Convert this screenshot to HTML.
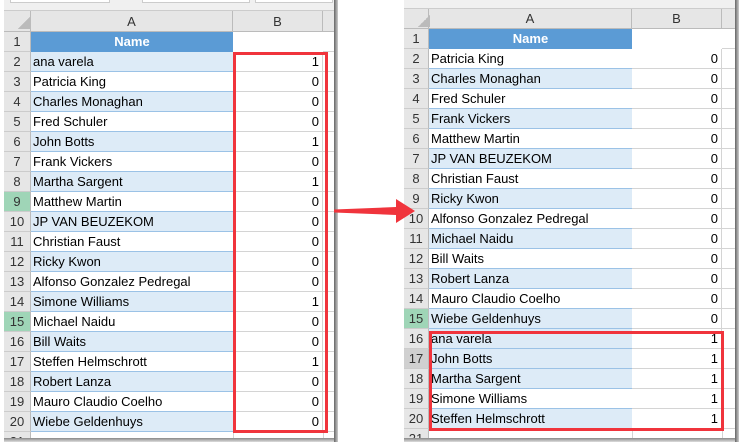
<!DOCTYPE html>
<html><head><meta charset="utf-8"><style>
body{margin:0;width:747px;height:446px;background:#fff;position:relative;overflow:hidden;font-family:"Liberation Sans",Calibri,sans-serif;}
.a{position:absolute;box-sizing:border-box;}
.t{font-size:13px;line-height:20px;white-space:nowrap;color:#000;}
</style></head><body>
<div id="root"></div>
<script>
var R=document.getElementById('root'),h='';
function box(x,y,w,hh,st,txt){h+='<div class="a" style="left:'+x+'px;top:'+y+'px;width:'+w+'px;height:'+hh+'px;'+st+'">'+(txt||'')+'</div>';}
function sheet(o){
 var X=o.x, Y0=o.y0, rh=o.rh, ca=o.ca, cb=o.cb, ce=o.ce, end=o.end;
 box(X,0,end-X,o.bottom,'background:#fff;border-left:1px solid #999;');
 box(X,0,end-X,Y0,'background:#e6e6e6;');
 box(X,0,end-X,o.hy,'background:#f0f0f0;border-bottom:1px solid #ccc;');
 box(X,o.hy,ca-X,o.bottom-o.hy,'background:#e6e6e6;border-right:1px solid #bbb;');
 box(ca,o.hy,cb-ca,Y0-o.hy,'border-right:1px solid #bbb;text-align:center;font-size:13px;line-height:'+(Y0-o.hy)+'px;color:#333;','A');
 box(cb,o.hy,ce-cb,Y0-o.hy,'border-right:1px solid #bbb;text-align:center;font-size:13px;line-height:'+(Y0-o.hy)+'px;color:#333;','B');
 box(X,Y0-1,end-X,1,'background:#bbb;');
 box(X+14,o.hy+6,12,12,'background:linear-gradient(135deg,transparent 50%,#bbb 50%);');
 for(var i=0;i<o.rows.length;i++){
  var r=o.rows[i],y=Y0+i*rh,n=i+1;
  var hb=r.hl=='g'?'#9fd5b7':(r.hl=='d'?'#d0d0d0':'#e6e6e6');
  box(X,y,ca-X,rh,'background:'+hb+';border-bottom:1px solid #ccc;border-right:1px solid #bbb;text-align:center;font-size:13px;line-height:'+rh+'px;color:#333;',n);
  if(n==1){box(ca,y,cb-ca,rh,'background:#5b9bd5;color:#fff;font-weight:bold;text-align:center;font-size:13px;line-height:'+rh+'px;','Name');}
  else{box(ca,y,cb-ca,rh,'background:'+(r.b?'#ddebf7':'#fff')+';border-bottom:1px solid #9bc2e6;padding-left:2px;','<span class="t">'+r.n+'</span>');
   box(cb,y,ce-cb,rh,'border-bottom:1px solid #d4d4d4;border-right:1px solid #d4d4d4;text-align:right;padding-right:3px;','<span class="t">'+r.v+'</span>');}
  box(ce,y,end-ce,rh,'border-bottom:1px solid #d4d4d4;');
 }
 var y21=Y0+o.rows.length*rh;
 box(X,y21,ca-X,o.bottom-y21,'background:#e6e6e6;border-right:1px solid #bbb;text-align:center;font-size:13px;line-height:20px;color:#333;overflow:hidden;','21');
 box(cb,y21,1,o.bottom-y21,'background:#d4d4d4;');
 box(ce,y21,1,o.bottom-y21,'background:#d4d4d4;');
 box(o.x,o.bottom,end-o.x+4,4,'background:linear-gradient(#888,#ddd);');
 box(end,0,4,o.bottom+4,'background:linear-gradient(90deg,#666,#ccc);');
}
var L=[['',0],['ana varela',1],['Patricia King',0],['Charles Monaghan',0],['Fred Schuler',0],['John Botts',1],['Frank Vickers',0],['Martha Sargent',1],['Matthew Martin',0],['JP VAN BEUZEKOM',0],['Christian Faust',0],['Ricky Kwon',0],['Alfonso Gonzalez Pedregal',0],['Simone Williams',1],['Michael Naidu',0],['Bill Waits',0],['Steffen Helmschrott',1],['Robert Lanza',0],['Mauro Claudio Coelho',0],['Wiebe Geldenhuys',0]];
var lr=L.map(function(a,i){var n=i+1;return {n:a[0],v:a[1],b:n%2==0,hl:(n==9||n==15)?'g':''};});
var Rr=[['',0],['Patricia King',0],['Charles Monaghan',0],['Fred Schuler',0],['Frank Vickers',0],['Matthew Martin',0],['JP VAN BEUZEKOM',0],['Christian Faust',0],['Ricky Kwon',0],['Alfonso Gonzalez Pedregal',0],['Michael Naidu',0],['Bill Waits',0],['Robert Lanza',0],['Mauro Claudio Coelho',0],['Wiebe Geldenhuys',0],['ana varela',1],['John Botts',1],['Martha Sargent',1],['Simone Williams',1],['Steffen Helmschrott',1]];
var rr=Rr.map(function(a,i){var n=i+1;var b=n%2==1;if(n>=16)b=(n!=19);return {n:a[0],v:a[1],b:b,hl:n==15?'g':(n==17?'d':'')};});
sheet({x:4,hy:11,y0:32,rh:20,ca:31,cb:233,ce:323,end:334,bottom:438,rows:lr});
sheet({x:404,hy:9,y0:29,rh:20,ca:429,cb:632,ce:722,end:735,bottom:438,rows:rr});
box(10,0,100,3,'border:1px solid #ccc;border-top:none;background:#fff;');
box(142,0,108,3,'border:1px solid #ccc;border-top:none;background:#fff;');
box(255,0,78,3,'border:1px solid #ccc;border-top:none;background:#fff;');
box(233,52,95,381,'border:3px solid #f0343c;');
box(429,331,295,100,'border:3px solid #f0343c;');
h+='<svg class="a" style="left:330px;top:195px" width="90" height="32"><polygon points="4,14.5 66,12 66,4 85,16 66,28 66,20 4,17.5" fill="#f0343c"/></svg>';
R.innerHTML=h;
</script>
</body></html>
